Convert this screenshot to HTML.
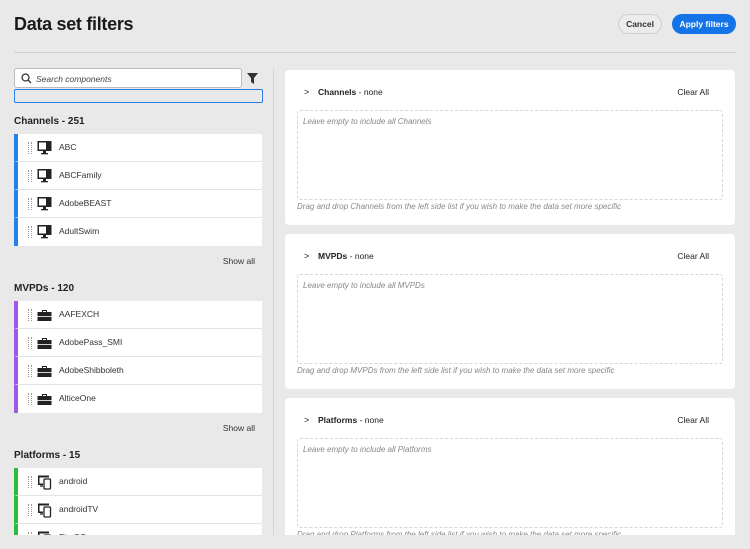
<!DOCTYPE html>
<html><head><meta charset="utf-8"><style>
*{box-sizing:border-box;margin:0;padding:0}
body{width:750px;height:549px;background:#e9e9e9;font-family:"Liberation Sans",sans-serif;color:#222;position:relative;overflow:hidden}
.abs{position:absolute}
h1{position:absolute;left:14px;top:14px;font-size:18px;font-weight:bold;color:#1a1a1a;letter-spacing:-0.3px}
.btn{position:absolute;top:14px;height:20px;border-radius:10px;font-size:8.5px;font-weight:bold;line-height:18px;text-align:center}
.hdr{position:absolute;left:14px;font-size:10px;font-weight:bold;color:#222}
.list{position:absolute;left:14px;width:248px;background:#fff}
.row{height:28px;border-left:4px solid;border-bottom:1px solid #e3e3e3;position:relative;font-size:8.5px;color:#333}
.row:last-child{border-bottom:none}
.row .t{position:absolute;left:41px;top:8px}
.row .d{position:absolute;left:10px;top:8px;width:4px;height:12px;border-left:1px dotted #999;border-right:1px dotted #999}
.row svg{position:absolute;left:19px;top:6px}
.show{position:absolute;font-size:8.5px;color:#333}
.panel{position:absolute;left:285px;width:450px;background:#fff;border-radius:4px}
.ph{position:absolute;left:33px;top:17px;font-size:8.5px;color:#222}
.chev{position:absolute;left:19px;top:17px;font-size:9px}
.clr{position:absolute;right:26px;top:17px;font-size:8.5px;color:#222}
.drop{position:absolute;left:12px;top:40px;width:426px;height:90px;border:1px dashed #d6d6d6;border-radius:3px}
.drop span{position:absolute;left:5px;top:6px;font-size:8px;font-style:italic;color:#888}
.help{position:absolute;left:12px;top:132px;font-size:8px;font-style:italic;color:#888;white-space:nowrap}
</style></head><body>
<h1>Data set filters</h1>
<div class="btn" style="left:618px;width:44px;border:1px solid #d0d0d0;background:#ececec;color:#333">Cancel</div>
<div class="btn" style="left:672px;width:64px;background:#1473e6;color:#fff;line-height:20px">Apply filters</div>
<div class="abs" style="left:14px;top:52px;width:722px;height:1px;background:#d0d0d0"></div>

<div class="abs" style="left:0;top:60px;width:750px;height:475px;overflow:hidden">
<div class="abs" style="left:273px;top:8px;width:1px;height:480px;background:#d4d4d4"></div>
<div class="abs" style="left:14px;top:8px;width:228px;height:20px;background:#fff;border:1px solid #bbb;border-radius:3px">
<svg class="abs" style="left:6px;top:4px" width="11" height="11" viewBox="0 0 11 11"><circle cx="4.5" cy="4.5" r="3.5" fill="none" stroke="#333" stroke-width="1.2"/><path d="M7 7l3 3" stroke="#333" stroke-width="1.3"/></svg>
<span class="abs" style="left:21px;top:5px;font-size:8.5px;font-style:italic;color:#444">Search components</span></div>
<svg class="abs" style="left:247px;top:13px" width="11" height="11" viewBox="0 0 11 11"><path d="M0 0h11L7 5v6L4 9V5z" fill="#333"/></svg>
<div class="abs" style="left:14px;top:29px;width:249px;height:14px;border:1.5px solid #2680eb;border-radius:2px;background:#e9e9e9"></div>
</div>
<div class="abs" style="left:0;top:60px;width:273px;height:475px;overflow:hidden">
<div class="hdr" style="top:56px">Channels - 251</div>
<div class="list" style="top:74px">
 <div class="row" style="border-left-color:#2680eb"><div class="d"></div><svg width="15" height="15" viewBox="0 0 15 15"><rect x="0.5" y="1" width="14" height="10" fill="#222"/><rect x="2" y="2.5" width="7" height="7" fill="#fff"/><rect x="6" y="11" width="3" height="2" fill="#222"/><rect x="4" y="13" width="7" height="1.3" fill="#222"/></svg><span class="t">ABC</span></div>
 <div class="row" style="border-left-color:#2680eb"><div class="d"></div><svg width="15" height="15" viewBox="0 0 15 15"><rect x="0.5" y="1" width="14" height="10" fill="#222"/><rect x="2" y="2.5" width="7" height="7" fill="#fff"/><rect x="6" y="11" width="3" height="2" fill="#222"/><rect x="4" y="13" width="7" height="1.3" fill="#222"/></svg><span class="t">ABCFamily</span></div>
 <div class="row" style="border-left-color:#2680eb"><div class="d"></div><svg width="15" height="15" viewBox="0 0 15 15"><rect x="0.5" y="1" width="14" height="10" fill="#222"/><rect x="2" y="2.5" width="7" height="7" fill="#fff"/><rect x="6" y="11" width="3" height="2" fill="#222"/><rect x="4" y="13" width="7" height="1.3" fill="#222"/></svg><span class="t">AdobeBEAST</span></div>
 <div class="row" style="border-left-color:#2680eb"><div class="d"></div><svg width="15" height="15" viewBox="0 0 15 15"><rect x="0.5" y="1" width="14" height="10" fill="#222"/><rect x="2" y="2.5" width="7" height="7" fill="#fff"/><rect x="6" y="11" width="3" height="2" fill="#222"/><rect x="4" y="13" width="7" height="1.3" fill="#222"/></svg><span class="t">AdultSwim</span></div>
</div>
<div class="show" style="top:196px;right:18px">Show all</div>
<div class="hdr" style="top:223px">MVPDs - 120</div>
<div class="list" style="top:241px">
 <div class="row" style="border-left-color:#9d5ae8"><div class="d"></div><svg width="15" height="15" viewBox="0 0 15 15"><path d="M5 3h5v2h-1V4H6v1H5z" fill="#222"/><rect x="0.5" y="5" width="14" height="9" fill="#222"/><rect x="0.5" y="9" width="14" height="0.8" fill="#fff"/></svg><span class="t">AAFEXCH</span></div>
 <div class="row" style="border-left-color:#9d5ae8"><div class="d"></div><svg width="15" height="15" viewBox="0 0 15 15"><path d="M5 3h5v2h-1V4H6v1H5z" fill="#222"/><rect x="0.5" y="5" width="14" height="9" fill="#222"/><rect x="0.5" y="9" width="14" height="0.8" fill="#fff"/></svg><span class="t">AdobePass_SMI</span></div>
 <div class="row" style="border-left-color:#9d5ae8"><div class="d"></div><svg width="15" height="15" viewBox="0 0 15 15"><path d="M5 3h5v2h-1V4H6v1H5z" fill="#222"/><rect x="0.5" y="5" width="14" height="9" fill="#222"/><rect x="0.5" y="9" width="14" height="0.8" fill="#fff"/></svg><span class="t">AdobeShibboleth</span></div>
 <div class="row" style="border-left-color:#9d5ae8"><div class="d"></div><svg width="15" height="15" viewBox="0 0 15 15"><path d="M5 3h5v2h-1V4H6v1H5z" fill="#222"/><rect x="0.5" y="5" width="14" height="9" fill="#222"/><rect x="0.5" y="9" width="14" height="0.8" fill="#fff"/></svg><span class="t">AlticeOne</span></div>
</div>
<div class="show" style="top:363px;right:18px">Show all</div>
<div class="hdr" style="top:390px">Platforms - 15</div>
<div class="list" style="top:408px">
 <div class="row" style="border-left-color:#2dbd3a"><div class="d"></div><svg width="16" height="16" viewBox="0 0 16 16"><path d="M1 1.5h11v2H2.5v6H6v1.5H1z" fill="#222"/><rect x="7" y="5" width="6.5" height="10" rx="1" fill="none" stroke="#222" stroke-width="1.3"/><path d="M3 12h3" stroke="#222" stroke-width="1.3"/></svg><span class="t">android</span></div>
 <div class="row" style="border-left-color:#2dbd3a"><div class="d"></div><svg width="16" height="16" viewBox="0 0 16 16"><path d="M1 1.5h11v2H2.5v6H6v1.5H1z" fill="#222"/><rect x="7" y="5" width="6.5" height="10" rx="1" fill="none" stroke="#222" stroke-width="1.3"/><path d="M3 12h3" stroke="#222" stroke-width="1.3"/></svg><span class="t">androidTV</span></div>
 <div class="row" style="border-left-color:#2dbd3a"><div class="d"></div><svg width="16" height="16" viewBox="0 0 16 16"><path d="M1 1.5h11v2H2.5v6H6v1.5H1z" fill="#222"/><rect x="7" y="5" width="6.5" height="10" rx="1" fill="none" stroke="#222" stroke-width="1.3"/><path d="M3 12h3" stroke="#222" stroke-width="1.3"/></svg><span class="t">FireOS</span></div>
</div>
</div>

<div class="abs" style="left:0;top:0;width:750px;height:535px;overflow:hidden;pointer-events:none">
<div class="panel" style="top:70px;height:155px"><span class="chev">&gt;</span><span class="ph"><b>Channels</b> - none</span><span class="clr">Clear All</span><div class="drop"><span>Leave empty to include all Channels</span></div><div class="help">Drag and drop Channels from the left side list if you wish to make the data set more specific</div></div>
<div class="panel" style="top:234px;height:155px"><span class="chev">&gt;</span><span class="ph"><b>MVPDs</b> - none</span><span class="clr">Clear All</span><div class="drop"><span>Leave empty to include all MVPDs</span></div><div class="help">Drag and drop MVPDs from the left side list if you wish to make the data set more specific</div></div>
<div class="panel" style="top:398px;height:155px"><span class="chev">&gt;</span><span class="ph"><b>Platforms</b> - none</span><span class="clr">Clear All</span><div class="drop"><span>Leave empty to include all Platforms</span></div><div class="help">Drag and drop Platforms from the left side list if you wish to make the data set more specific</div></div>
</div>
</body></html>
